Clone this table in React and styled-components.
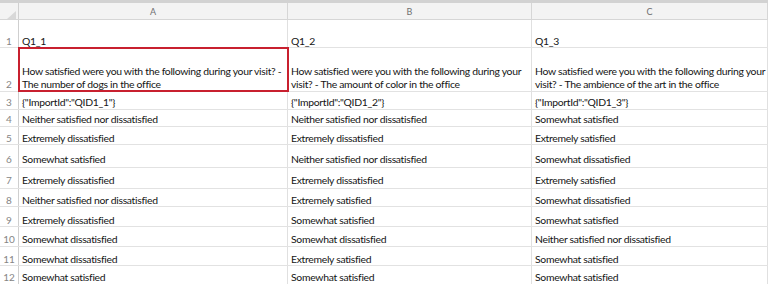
import React from "react";
import styled, { createGlobalStyle } from "styled-components";

const Global = createGlobalStyle`
  html, body { margin: 0; padding: 0; background: #ffffff; }
  body { font-family: Lato, "Open Sans", Arial, sans-serif; }
`;

const COLS = "19px 269px 244px 236px";

const Sheet = styled.div`
  width: 768px;
  height: 284px;
  overflow: hidden;
  background: #ffffff;
  border-top: 3px solid #d2d2d2;
  box-sizing: border-box;
`;

const HeaderRow = styled.div`
  display: grid;
  grid-template-columns: ${COLS};
  height: 17px;
  background: #f3f3f3;
  border-bottom: 1px solid #d6d6d6;
  box-sizing: border-box;
`;

const Corner = styled.div`
  border-right: 1px solid #d0d0d0;
  display: flex;
  align-items: flex-end;
  justify-content: flex-end;
  padding: 0 2px 0 0;
`;

const ColHead = styled.div`
  display: flex;
  align-items: center;
  justify-content: center;
  font-size: 9px;
  color: #6f6f6f;
  border-right: 1px solid #d6d6d6;
`;

const Row = styled.div`
  display: grid;
  grid-template-columns: ${COLS};
  height: ${(p) => p.$h}px;
  border-bottom: 1px solid #e2e2e2;
  box-sizing: border-box;
`;

const RowNum = styled.div`
  display: flex;
  align-items: flex-end;
  justify-content: center;
  font-size: 10px;
  line-height: 11px;
  padding-bottom: ${(p) => p.$pb}px;
  color: #858585;
  border-right: 1px solid #cfcfcf;
`;

const Cell = styled.div`
  position: relative;
  display: flex;
  align-items: flex-end;
  padding: 0 2px ${(p) => p.$pb}px 3px;
  font-size: 10.4px;
  letter-spacing: -0.3px;
  line-height: 11px;
  color: #141414;
  border-right: 1px solid #e0e0e0;
  white-space: nowrap;
  outline: ${(p) => (p.$hl ? "2px solid #c8202f" : "none")};
  outline-offset: -1px;
  z-index: ${(p) => (p.$hl ? 1 : 0)};
`;

const Lines = styled.span`
  display: block;
  line-height: 13px;
  margin-bottom: -1px;
`;

const rows = [
  { n: 1, h: 28, pb: 0, c: ["Q1_1", "Q1_2", "Q1_3"] },
  {
    n: 2,
    h: 44,
    pb: 1,
    c: [
      ["How satisfied were you with the following during your visit? -", "The number of dogs in the office"],
      ["How satisfied were you with the following during your", "visit? - The amount of color in the office"],
      ["How satisfied were you with the following during your", "visit? - The ambience of the art in the office"],
    ],
  },
  { n: 3, h: 18, pb: 1, c: ['{"ImportId":"QID1_1"}', '{"ImportId":"QID1_2"}', '{"ImportId":"QID1_3"}'] },
  { n: 4, h: 17, pb: 1, c: ["Neither satisfied nor dissatisfied", "Neither satisfied nor dissatisfied", "Somewhat satisfied"] },
  { n: 5, h: 18, pb: 0, c: ["Extremely dissatisfied", "Extremely dissatisfied", "Extremely satisfied"] },
  { n: 6, h: 23, pb: 2, c: ["Somewhat satisfied", "Neither satisfied nor dissatisfied", "Somewhat dissatisfied"] },
  { n: 7, h: 21, pb: 2, c: ["Extremely dissatisfied", "Extremely dissatisfied", "Extremely satisfied"] },
  { n: 8, h: 18, pb: 0, c: ["Neither satisfied nor dissatisfied", "Extremely satisfied", "Somewhat dissatisfied"] },
  { n: 9, h: 20, pb: 0, c: ["Extremely dissatisfied", "Somewhat satisfied", "Somewhat satisfied"] },
  { n: 10, h: 20, pb: 1, c: ["Somewhat dissatisfied", "Somewhat dissatisfied", "Neither satisfied nor dissatisfied"] },
  { n: 11, h: 19, pb: 0, c: ["Somewhat dissatisfied", "Extremely satisfied", "Somewhat satisfied"] },
  { n: 12, h: 19, pb: 1, c: ["Somewhat satisfied", "Somewhat satisfied", "Somewhat satisfied"] },
];

function CellText({ v }) {
  if (Array.isArray(v)) {
    return (
      <Lines>
        {v.map((l, i) => (
          <React.Fragment key={i}>
            {l}
            {i < v.length - 1 && <br />}
          </React.Fragment>
        ))}
      </Lines>
    );
  }
  return v;
}

export default function App() {
  return (
    <>
      <Global />
      <Sheet>
        <HeaderRow>
          <Corner>
            <svg width="9" height="8" viewBox="0 0 9 8">
              <polygon points="0,8 9,8 9,0" fill="#d8d8d8" />
            </svg>
          </Corner>
          <ColHead>A</ColHead>
          <ColHead>B</ColHead>
          <ColHead>C</ColHead>
        </HeaderRow>
        {rows.map((r) => (
          <Row key={r.n} $h={r.h}>
            <RowNum $pb={r.pb}>{r.n}</RowNum>
            {r.c.map((v, i) => (
              <Cell key={i} $pb={r.pb} $hl={r.n === 2 && i === 0}>
                <CellText v={v} />
              </Cell>
            ))}
          </Row>
        ))}
      </Sheet>
    </>
  );
}
